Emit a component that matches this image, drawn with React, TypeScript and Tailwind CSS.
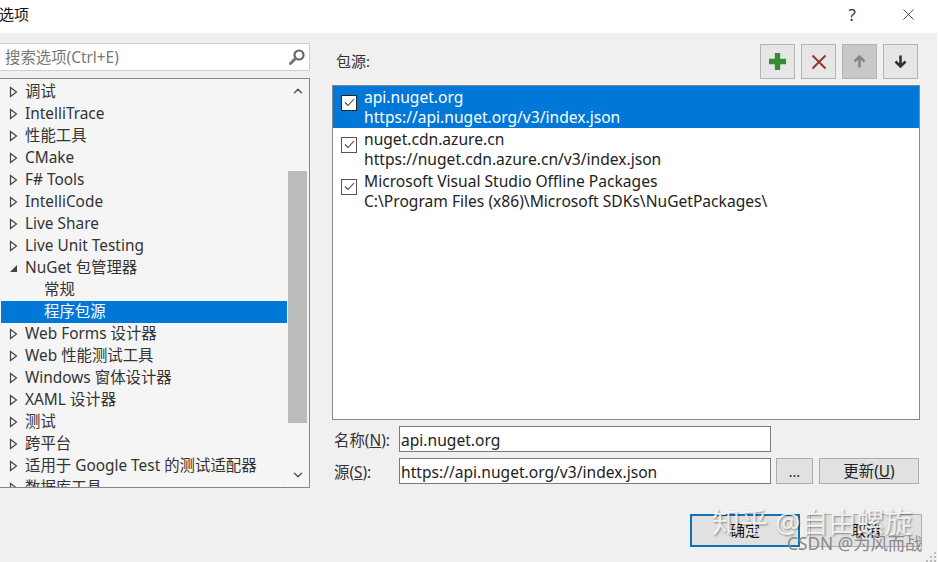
import { ChevronDown, ChevronUp, X } from 'lucide-react'

const font = '[font-family:"Noto_Sans","Noto_Sans_CJK_SC",sans-serif]'

const treeItems = [
  { label: '调试' },
  { label: 'IntelliTrace' },
  { label: '性能工具' },
  { label: 'CMake' },
  { label: 'F# Tools' },
  { label: 'IntelliCode' },
  { label: 'Live Share' },
  { label: 'Live Unit Testing' },
  { label: 'NuGet 包管理器', open: true },
  { label: '常规', child: true },
  { label: '程序包源', child: true, selected: true },
  { label: 'Web Forms 设计器' },
  { label: 'Web 性能测试工具' },
  { label: 'Windows 窗体设计器' },
  { label: 'XAML 设计器' },
  { label: '测试' },
  { label: '跨平台' },
  { label: '适用于 Google Test 的测试适配器' },
  { label: '数据库工具' },
]

const sources = [
  { name: 'api.nuget.org', url: 'https://api.nuget.org/v3/index.json', selected: true },
  { name: 'nuget.cdn.azure.cn', url: 'https://nuget.cdn.azure.cn/v3/index.json' },
  {
    name: 'Microsoft Visual Studio Offline Packages',
    url: 'C:\\Program Files (x86)\\Microsoft SDKs\\NuGetPackages\\',
  },
]

const Arrow = ({ open }: { open?: boolean }) =>
  open ? (
    <svg width="9" height="9" viewBox="0 0 9 9">
      <path d="M8 1v7H1z" fill="#444" />
    </svg>
  ) : (
    <svg width="9" height="12" viewBox="0 0 9 12">
      <path d="M1.5 1.5v9L7.5 6z" fill="none" stroke="#444" strokeWidth="1.2" />
    </svg>
  )

const TreeRow = ({ item }: { item: (typeof treeItems)[number] }) => (
  <div
    className={`flex h-[22px] shrink-0 items-center text-[15.4px] ${
      item.selected ? 'bg-[#0078d7] text-white' : 'text-[#333]'
    }`}
  >
    <div className={`flex shrink-0 justify-center ${item.child ? 'w-[43px]' : 'w-[24px]'}`}>
      {!item.child && <Arrow open={item.open} />}
    </div>
    <span className="whitespace-nowrap">{item.label}</span>
  </div>
)

const SourceRow = ({ source }: { source: (typeof sources)[number] }) => (
  <div
    className={`flex h-[42px] shrink-0 items-center pl-[8px] text-[15.6px] leading-[20px] ${
      source.selected ? 'bg-[#0078d7] text-white' : 'text-[#222]'
    }`}
  >
    <div
      className={`mb-[9px] mr-[7px] flex h-[16px] w-[16px] shrink-0 items-center justify-center border ${
        source.selected ? 'border-[#222] bg-white' : 'border-[#555] bg-white'
      }`}
    >
      <svg width="11" height="9" viewBox="0 0 11 9">
        <path d="M1 4.5l3 3 6-6.5" fill="none" stroke="#444" strokeWidth="1.1" />
      </svg>
    </div>
    <div className="-mt-[1px] whitespace-nowrap">
      <div>{source.name}</div>
      <div>{source.url}</div>
    </div>
  </div>
)

const ToolButton = ({ children, disabled }: { children: React.ReactNode; disabled?: boolean }) => (
  <div
    className={`flex h-[35px] w-[35px] items-center justify-center border border-[#b4b4b4] ${
      disabled ? 'bg-[#c8c8c8]' : 'bg-[#e6e6e6]'
    }`}
  >
    {children}
  </div>
)

const Field = ({ label, hotkey, value }: { label: string; hotkey: string; value: string }) => (
  <div className="flex h-[26px] items-center">
    <div className="w-[67px] shrink-0 pl-[2px] pt-[3px] text-[15.4px] text-[#333]">
      {label}(<span className="underline">{hotkey}</span>):
    </div>
    <div className="flex h-[26px] w-[372px] items-center border border-[#7a7a7a] bg-white pl-[1px] pt-[3px] text-[15.6px] text-[#222]">
      {value}
    </div>
  </div>
)

export default function App() {
  return (
    <div className={`relative flex h-[562px] w-[939px] flex-col overflow-hidden bg-white ${font}`}>
      {/* title bar */}
      <div className="flex h-[33px] shrink-0 items-center bg-white pb-[4px]">
        <span className="ml-[-1px] text-[15px] text-[#111]">选项</span>
        <span className="ml-auto mr-[43px] text-[17px] text-[#333]">?</span>
        <X className="mr-[21px] h-[19px] w-[19px] text-[#222]" strokeWidth={1} />
      </div>

      <div className="mr-[2px] flex min-h-0 flex-1 bg-[#f0f0f0]">
        {/* left: search + tree */}
        <div className="ml-[-1px] flex w-[311px] shrink-0 flex-col pt-[10px]">
          <div className="flex h-[28px] items-center border border-[#ccced6] bg-white pl-[5px] pr-[3px] text-[15.4px] text-[#777]">
            <span className="pt-[2px]">搜索选项(Ctrl+E)</span>
            <svg width="18" height="18" viewBox="0 0 18 18" className="ml-auto">
              <circle cx="11" cy="7" r="4.5" fill="none" stroke="#666" strokeWidth="2.2" />
              <path d="M7.5 10.5L2.5 15.5" stroke="#777" strokeWidth="3" strokeLinecap="round" />
            </svg>
          </div>
          <div className="mt-[7px] flex h-[410px] border border-[#828790] bg-[#f5f5f5]">
            <div className="flex min-w-0 flex-1 flex-col overflow-hidden pl-[1px] pt-[2px]">
              {treeItems.map((item) => (
                <TreeRow key={item.label} item={item} />
              ))}
            </div>
            <div className="mr-[2px] flex w-[20px] shrink-0 flex-col border-l border-[#f9f9f9] bg-[#f5f5f5]">
              <div className="flex h-[92px] shrink-0 justify-center pt-[5px]">
                <ChevronUp className="h-[14px] w-[14px] text-[#555]" strokeWidth={2.5} />
              </div>
              <div className="h-[252px] shrink-0 bg-[#bcbcbc]" />
              <div className="flex flex-1 items-end justify-center pb-[5px]">
                <ChevronDown className="h-[14px] w-[14px] text-[#555]" strokeWidth={2.5} />
              </div>
            </div>
          </div>
        </div>

        {/* right: sources */}
        <div className="ml-[22px] flex w-[588px] shrink-0 flex-col">
          <div className="flex h-[52px] shrink-0 items-start justify-between pt-[11px]">
            <span className="ml-[4px] mt-[6px] text-[15px] text-[#333]">包源:</span>
            <div className="mr-[2px] flex gap-[6px]">
              <ToolButton>
                <svg width="17" height="17" viewBox="0 0 16 16">
                  <path d="M5.5 0h5v5.5H16v5h-5.5V16h-5v-5.5H0v-5h5.5z" fill="#388a34" />
                </svg>
              </ToolButton>
              <ToolButton>
                <svg width="16" height="16" viewBox="0 0 16 16">
                  <path d="M1.5 1.5l13 13M14.5 1.5l-13 13" stroke="#8f3a28" strokeWidth="2" />
                </svg>
              </ToolButton>
              <ToolButton disabled>
                <svg width="13" height="15" viewBox="0 0 13 15">
                  <path d="M6.5 13.5V2.500M1.500 7.500l5-5 5 5" fill="none" stroke="#868686" strokeWidth="2.6" />
                </svg>
              </ToolButton>
              <ToolButton>
                <svg width="13" height="15" viewBox="0 0 13 15">
                  <path d="M6.5 1.500v11M1.500 7.500l5 5 5-5" fill="none" stroke="#333" strokeWidth="2.6" />
                </svg>
              </ToolButton>
            </div>
          </div>
          <div className="flex h-[335px] shrink-0 flex-col border border-[#828790] bg-white">
            {sources.map((source) => (
              <SourceRow key={source.name} source={source} />
            ))}
          </div>
          <div className="mt-[6px] flex flex-col gap-[6px]">
            <Field label="名称" hotkey="N" value="api.nuget.org" />
            <div className="flex">
              <Field label="源" hotkey="S" value="https://api.nuget.org/v3/index.json" />
              <button className="ml-[5px] h-[26px] w-[37px] border border-[#adadad] bg-[#e1e1e1] text-[14px] text-[#222]">
                ...
              </button>
              <button className="ml-[6px] h-[26px] w-[100px] border border-[#adadad] bg-[#e1e1e1] pt-[1px] text-[15.4px] text-[#222]">
                更新(<span className="underline">U</span>)
              </button>
            </div>
          </div>
          <div className="-mr-[2px] mt-[30px] flex justify-end gap-[10px]">
            <button className="h-[33px] w-[110px] border-2 border-[#0e72b5] bg-[#e1e1e1] text-[15px] text-[#111]">
              确定
            </button>
            <button className="h-[33px] w-[112px] border border-[#adadad] bg-[#e1e1e1] text-[15px] text-[#111]">
              取消
            </button>
          </div>
        </div>
      </div>

      {/* watermarks sitting over the dialog buttons */}
      <div className="absolute left-[712px] top-[504px] whitespace-nowrap text-[28px] leading-[36px] text-white/80 [text-shadow:1px_1px_2px_rgba(0,0,0,0.4)]">
        知乎 @自由螺旋
      </div>
      <div className="absolute left-[787px] top-[533px] whitespace-nowrap text-[17.3px] leading-[22px] text-[#8a8a8a]">
        CSDN @为风而战
      </div>
      {/* resize grip */}
      <svg width="10" height="10" viewBox="0 0 10 10" className="absolute left-[926px] top-[552px]">
        <path d="M8 0h2v2H8zM4 4h2v2H4zM8 4h2v2H8zM0 8h2v2H0zM4 8h2v2H4zM8 8h2v2H8z" fill="#bbb" />
      </svg>
    </div>
  )
}
